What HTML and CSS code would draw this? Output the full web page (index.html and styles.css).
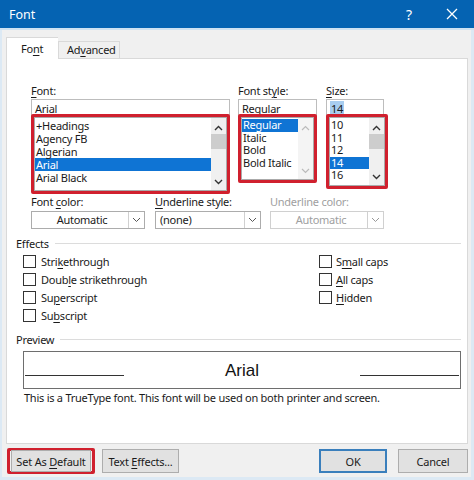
FILE: index.html
```html
<!DOCTYPE html>
<html lang="en">
<head>
    <meta charset="UTF-8">
    <title>Font</title>
    <link rel="stylesheet" href="styles.css">
</head>
<body>
    <div class="window">
        <!-- Title bar -->
        <div class="titlebar">
            <span class="title">Font</span>
            <span class="help">?</span>
            <svg class="close" width="12" height="12" viewBox="0 0 12 12"><path d="M1 1L11 11M11 1L1 11" stroke="#fff" stroke-width="1.3"/></svg>
        </div>

        <div class="dialog">
            <div class="tabs">
                <div class="tab active">Fo<u>n</u>t</div>
                <div class="tab">Ad<u>v</u>anced</div>
            </div>

            <div class="panel">
                <!-- Font / style / size pickers -->
                <div class="pickers">
                    <div class="picker font-pick">
                        <div class="label"><u>F</u>ont:</div>
                        <div class="field">Arial</div>
                        <div class="mark mark-font">
                            <div class="listbox">
                                <ul class="items">
                                    <li>+Headings</li>
                                    <li>Agency FB</li>
                                    <li>Algerian</li>
                                    <li class="selected">Arial</li>
                                    <li>Arial Black</li>
                                </ul>
                                <div class="scroll">
                                    <svg class="arrow" width="9" height="6" viewBox="0 0 9 6"><path d="M1 5L4.5 1.5L8 5" fill="none" stroke="#333" stroke-width="1.4"/></svg>
                                    <div class="thumb"></div>
                                    <svg class="arrow down" width="9" height="6" viewBox="0 0 9 6"><path d="M1 1L4.5 4.5L8 1" fill="none" stroke="#333" stroke-width="1.4"/></svg>
                                </div>
                            </div>
                        </div>
                    </div>

                    <div class="picker style-pick">
                        <div class="label">Font st<u>y</u>le:</div>
                        <div class="field">Regular</div>
                        <div class="mark mark-style">
                            <div class="listbox">
                                <ul class="items">
                                    <li class="selected">Regular</li>
                                    <li>Italic</li>
                                    <li>Bold</li>
                                    <li>Bold Italic</li>
                                </ul>
                                <div class="scroll disabled">
                                    <svg class="arrow" width="9" height="6" viewBox="0 0 9 6"><path d="M1 5L4.5 1.5L8 5" fill="none" stroke="#bbb" stroke-width="1.2"/></svg>
                                    <svg class="arrow down" width="9" height="6" viewBox="0 0 9 6"><path d="M1 1L4.5 4.5L8 1" fill="none" stroke="#bbb" stroke-width="1.2"/></svg>
                                </div>
                            </div>
                        </div>
                    </div>

                    <div class="picker size-pick">
                        <div class="label"><u>S</u>ize:</div>
                        <div class="field"><span class="hilite">14</span></div>
                        <div class="mark mark-size">
                            <div class="listbox">
                                <ul class="items">
                                    <li>10</li>
                                    <li>11</li>
                                    <li>12</li>
                                    <li class="selected">14</li>
                                    <li>16</li>
                                </ul>
                                <div class="scroll">
                                    <svg class="arrow" width="9" height="6" viewBox="0 0 9 6"><path d="M1 5L4.5 1.5L8 5" fill="none" stroke="#333" stroke-width="1.4"/></svg>
                                    <div class="thumb"></div>
                                    <svg class="arrow down" width="9" height="6" viewBox="0 0 9 6"><path d="M1 1L4.5 4.5L8 1" fill="none" stroke="#333" stroke-width="1.4"/></svg>
                                </div>
                            </div>
                        </div>
                    </div>
                </div>

                <!-- Colour and underline drop-downs -->
                <div class="selects">
                    <div class="select-col color-col">
                        <div class="label">Font <u>c</u>olor:</div>
                        <div class="combo centered"><span class="value">Automatic</span><span class="drop"><svg width="9" height="6" viewBox="0 0 9 6"><path d="M1 1L4.5 4.5L8 1" fill="none" stroke="#555" stroke-width="1"/></svg></span></div>
                    </div>
                    <div class="select-col under-col">
                        <div class="label"><u>U</u>nderline style:</div>
                        <div class="combo"><span class="value">(none)</span><span class="drop"><svg width="9" height="6" viewBox="0 0 9 6"><path d="M1 1L4.5 4.5L8 1" fill="none" stroke="#555" stroke-width="1"/></svg></span></div>
                    </div>
                    <div class="select-col color-col off">
                        <div class="label">Underline color:</div>
                        <div class="combo centered"><span class="value">Automatic</span><span class="drop"><svg width="9" height="6" viewBox="0 0 9 6"><path d="M1 1L4.5 4.5L8 1" fill="none" stroke="#999" stroke-width="1"/></svg></span></div>
                    </div>
                </div>

                <div class="group-title">Effects</div>
                <div class="effects">
                    <div class="checks">
                        <div class="check"><span class="box"></span>Stri<u>k</u>ethrough</div>
                        <div class="check"><span class="box"></span>Doub<u>l</u>e strikethrough</div>
                        <div class="check"><span class="box"></span>Su<u>p</u>erscript</div>
                        <div class="check"><span class="box"></span>Su<u>b</u>script</div>
                    </div>
                    <div class="checks right">
                        <div class="check"><span class="box"></span>S<u>m</u>all caps</div>
                        <div class="check"><span class="box"></span><u>A</u>ll caps</div>
                        <div class="check"><span class="box"></span><u>H</u>idden</div>
                    </div>
                </div>

                <div class="group-title preview-title">Preview</div>
                <div class="preview">
                    <span class="rule"></span>
                    <span class="sample">Arial</span>
                    <span class="rule"></span>
                </div>
                <p class="note">This is a TrueType font. This font will be used on both printer and screen.</p>
            </div>

            <div class="buttons">
                <div class="mark-btn"><button>Set As <u>D</u>efault</button></div>
                <button class="effects-btn">Text <u>E</u>ffects...</button>
                <span class="spacer"></span>
                <button class="ok">OK</button>
                <button>Cancel</button>
            </div>
        </div>
    </div>
</body>
</html>
```

FILE: styles.css
```css
body {
    margin: 0;
    font-family: "Noto Sans", sans-serif;
    font-size: 11px;
    letter-spacing: -0.25px;
    color: #1a1a1a;
}

u {
    text-decoration-thickness: 1px;
    text-underline-offset: 2px;
}

.window {
    width: 474px;
    height: 480px;
    box-sizing: border-box;
    background: #f0f0f0;
    border-left: 2px solid #dce9f4;
    border-right: 3px solid #dce9f4;
    border-bottom: 3px solid #dce9f4;
}

.titlebar {
    height: 28px;
    margin: 0 -3px 0 -2px;
    background: #0563b2;
    color: #fff;
    display: flex;
    align-items: center;
    padding: 0 16px 0 9px;
    border-bottom: 2px solid #cfe2f2;
    letter-spacing: 0;
}

.title {
    font-size: 12.5px;
    flex: 1;
}

.help {
    font-size: 14px;
    margin-right: 34px;
}

.dialog {
    padding: 6px 3px 0 4px;
}

/* tabs */
.tabs {
    display: flex;
    align-items: flex-end;
    height: 22px;
}

.tab {
    height: 17px;
    padding: 0 7px;
    border: 1px solid #d9d9d9;
    border-bottom: none;
    line-height: 16px;
    box-sizing: border-box;
}

.tab.active {
    height: 22px;
    width: 52px;
    background: #fff;
    padding-left: 14px;
    line-height: 22px;
    position: relative;
    top: 1px;
    border-right: none;
}

.tab:not(.active) {
    width: 62px;
    padding-left: 8px;
}

.panel {
    background: #fff;
    border: 1px solid #d9d9d9;
    height: 386px;
    box-sizing: border-box;
    padding: 25px 6px 0 16px;
}

.label {
    height: 14px;
    line-height: 14px;
    white-space: nowrap;
}

/* pickers */
.pickers {
    display: flex;
    padding-left: 8px;
}

.picker {
    display: flex;
    flex-direction: column;
}

.font-pick { width: 199px; margin-right: 8px; }
.style-pick { width: 79px; margin-right: 9px; }
.size-pick { width: 62px; }

.field {
    height: 18px;
    margin-top: 1px;
    border: 1px solid #bdbdbd;
    border-bottom: none;
    box-sizing: border-box;
    padding-left: 3px;
    line-height: 18px;
}

.size-pick .field { width: 58px; }

.hilite {
    background: #a8cdef;
    padding: 0 1px;
}

.mark {
    border: 3px solid #d0202e;
    border-radius: 2px;
    margin-top: -3px;
    box-sizing: border-box;
}

.mark-font { height: 80px; }
.mark-style { height: 69px; }
.mark-size { height: 75px; }

.listbox {
    display: flex;
    height: 100%;
    border: 1px solid #aaa;
    box-sizing: border-box;
}

.items {
    list-style: none;
    margin: 0;
    padding: 1px 0 0 0;
    flex: 1;
}

.items li {
    height: 13px;
    line-height: 13px;
    padding-left: 1px;
    white-space: nowrap;
}

.style-pick .items li,
.size-pick .items li {
    height: 12.5px;
    line-height: 12.5px;
}

.items li.selected {
    background: #0f74d4;
    color: #fff;
}

.scroll {
    width: 15px;
    flex: none;
    background: #f0f0f0;
    display: flex;
    flex-direction: column;
    align-items: center;
    padding: 7px 0 5px;
    box-sizing: border-box;
}

.scroll .down {
    margin-top: auto;
}

.thumb {
    width: 15px;
    height: 15px;
    background: #cdcdcd;
    margin-top: 3px;
}

.scroll.disabled {
    background: #f4f4f4;
}

/* drop-downs */
.selects {
    display: flex;
    padding-left: 8px;
    margin-top: 1px;
}

.select-col {
    display: flex;
    flex-direction: column;
}

.color-col { width: 114px; }
.under-col { width: 106px; margin: 0 9px 0 10px; }

.combo {
    display: flex;
    height: 18px;
    margin-top: 2px;
    border: 1px solid #acacac;
    box-sizing: border-box;
    line-height: 16px;
}

.combo .value {
    flex: 1;
    padding-left: 4px;
}

.combo.centered .value {
    text-align: center;
}

.drop {
    width: 15px;
    border-left: 1px solid #d0d0d0;
    display: flex;
    align-items: center;
    justify-content: center;
}

.off {
    color: #a0a0a0;
}

.off .combo {
    border-color: #d0d0d0;
}

/* group headings with a rule after the text */
.group-title {
    display: flex;
    align-items: center;
    height: 14px;
    margin: 7px 0 0 -7px;
    gap: 6px;
}

.preview-title {
    margin-top: 8px;
}

.group-title::after {
    content: "";
    flex: 1;
    border-top: 1px solid #dcdcdc;
}

.effects {
    display: flex;
    margin-top: 2px;
}

.checks {
    width: 296px;
    flex: none;
}

.checks.right {
    flex: 1;
}

.check {
    display: flex;
    align-items: center;
    height: 18px;
}

.box {
    width: 11px;
    height: 11px;
    border: 1px solid #333;
    margin-right: 5px;
}

.checks.right .box {
    margin-right: 4px;
}

.preview {
    margin-top: 5px;
    height: 38px;
    border: 1px solid #6e6e6e;
    box-sizing: border-box;
    display: flex;
    align-items: flex-end;
    padding: 0 1px 12px;
}

.rule {
    width: 99px;
    border-bottom: 1px solid #333;
}

.sample {
    flex: 1;
    text-align: center;
    font-family: "Liberation Sans", Arial, sans-serif;
    font-size: 17px;
    line-height: 17px;
    letter-spacing: 0;
    color: #111;
    margin-bottom: -3px;
}

.note {
    margin: 2px 0 0 1px;
    height: 14px;
    line-height: 14px;
}

/* bottom buttons */
.buttons {
    display: flex;
    align-items: center;
    margin-top: 4px;
    padding-left: 1px;
}

button {
    font-family: inherit;
    font-size: 11px;
    letter-spacing: -0.2px;
    color: #1a1a1a;
    background: #e1e1e1;
    border: 1px solid #adadad;
    height: 24px;
    width: 70px;
    padding: 0;
    white-space: nowrap;
}

.mark-btn {
    border: 3px solid #d0202e;
    border-radius: 2px;
    padding: 0 1px;
    height: 26px;
    box-sizing: border-box;
    display: flex;
    align-items: center;
}

.mark-btn button {
    width: 80px;
    height: 22px;
}

.effects-btn {
    width: 77px;
    margin-left: 7px;
}

.spacer {
    flex: 1;
}

button.ok {
    border: 2px solid #3a7fbc;
    width: 68px;
    margin-right: 11px;
}
```
